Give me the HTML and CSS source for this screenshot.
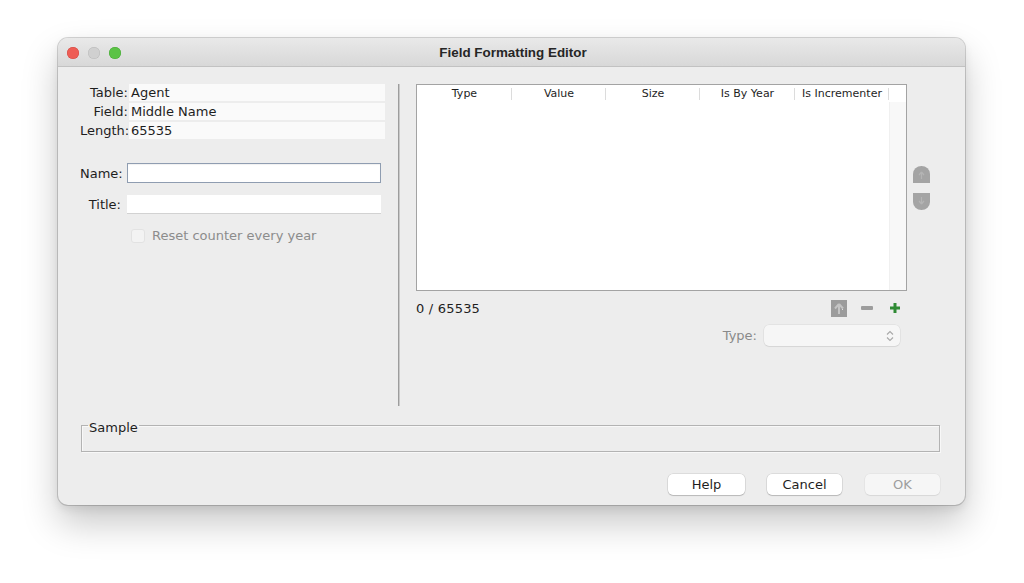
FILE: index.html
```html
<!DOCTYPE html>
<html lang="en">
<head>
<meta charset="utf-8">
<title>Field Formatting Editor</title>
<link rel="stylesheet" href="styles.css">
</head>
<body>
<div class="window">
  <div class="titlebar">
    <div class="lights">
      <span class="light red"></span>
      <span class="light gray"></span>
      <span class="light green"></span>
    </div>
    <div class="title">Field Formatting Editor</div>
  </div>
  <div class="content">
    <div class="main">
      <div class="left">
        <div class="info">
          <div class="info-row"><span class="info-label">Table:</span><span class="info-value">Agent</span></div>
          <div class="info-row"><span class="info-label">Field:</span><span class="info-value">Middle Name</span></div>
          <div class="info-row"><span class="info-label">Length:</span><span class="info-value">65535</span></div>
        </div>
        <div class="form-row name-row">
          <span class="form-label">Name:</span>
          <span class="input name-input"></span>
        </div>
        <div class="form-row title-row">
          <span class="form-label">Title:</span>
          <span class="input title-input"></span>
        </div>
        <div class="check-row">
          <span class="checkbox"></span>
          <span class="check-label">Reset counter every year</span>
        </div>
      </div>
      <div class="separator"></div>
      <div class="right">
        <div class="table">
          <div class="thead">
            <div class="th wide">Type</div>
            <div class="th">Value</div>
            <div class="th">Size</div>
            <div class="th wide">Is By Year</div>
            <div class="th">Is Incrementer</div>
            <div class="th-corner"></div>
          </div>
          <div class="tbody">
            <div class="rows"></div>
            <div class="scrolltrack"></div>
          </div>
        </div>
        <div class="status-row">
          <span class="count">0 / 65535</span>
          <div class="tools">
            <svg class="tool-up" width="16" height="17" viewBox="0 0 16 17">
              <rect width="16" height="17" fill="#9c9c9c"/>
              <path d="M8 4 L4 8.5 M8 4 L12 8.5 M8 4 V14" stroke="#c4c4c4" stroke-width="2" fill="none"/>
              <rect x="11" y="9" width="1" height="1" fill="#e0e0e0"/>
            </svg>
            <svg class="tool-minus" width="12" height="4" viewBox="0 0 12 4">
              <rect width="12" height="4" rx="1" fill="#9d9d9d"/>
            </svg>
            <svg class="tool-plus" width="10" height="10" viewBox="0 0 10 10">
              <path d="M3.5 0h3v3.5h3.5v3h-3.5v3.5h-3v-3.5h-3.5v-3h3.5z" fill="#2f8a34"/>
            </svg>
          </div>
        </div>
        <div class="type-row">
          <span class="type-label">Type:</span>
          <div class="combo">
            <svg width="8" height="12" viewBox="0 0 8 12">
              <path d="M1 4.5 L4 1.5 L7 4.5 M1 7.5 L4 10.5 L7 7.5" stroke="#a8a8a8" stroke-width="1.1" fill="none"/>
            </svg>
          </div>
        </div>
      </div>
      <div class="side-buttons">
        <svg width="17" height="17" viewBox="0 0 17 17">
          <path d="M0 8 A8.5 8 0 0 1 17 8 V17 H0 Z" fill="#a4a4a4"/>
          <path d="M8.5 6 L6 9 M8.5 6 L11 9 M8.5 6 V13" stroke="#b4b4b4" stroke-width="1.2" fill="none"/>
        </svg>
        <svg width="17" height="17" viewBox="0 0 17 17">
          <path d="M0 0 H17 V9 A8.5 8 0 0 1 0 9 Z" fill="#a4a4a4"/>
          <path d="M8.5 11 L6 8 M8.5 11 L11 8 M8.5 11 V4" stroke="#b4b4b4" stroke-width="1.2" fill="none"/>
        </svg>
      </div>
    </div>
    <fieldset class="sample">
      <legend>Sample</legend>
    </fieldset>
    <div class="buttons">
      <button class="btn help">Help</button>
      <button class="btn cancel">Cancel</button>
      <button class="btn ok" disabled>OK</button>
    </div>
  </div>
</div>
</body>
</html>
```
FILE: styles.css
```css
* { box-sizing: border-box; }

html, body {
  margin: 0;
  padding: 0;
  width: 1024px;
  height: 583px;
  overflow: hidden;
  background: #ffffff;
}

body {
  padding: 38px 0 0 58px;
  font-family: "DejaVu Sans", "Noto Sans", sans-serif;
  font-size: 13px;
  color: #1e1e1e;
}

.window {
  width: 907px;
  height: 467px;
  border-radius: 10px;
  background: #ededed;
  box-shadow: 0 0 0 1px rgba(0, 0, 0, 0.16), 0 18px 36px rgba(0, 0, 0, 0.22), 0 4px 10px rgba(0, 0, 0, 0.08);
  overflow: hidden;
  display: flex;
  flex-direction: column;
}

.titlebar {
  position: relative;
  height: 29px;
  flex: none;
  background: linear-gradient(#e9e9e9, #d8d8d8);
  border-bottom: 1px solid #c2c2c2;
  display: flex;
  align-items: center;
  justify-content: center;
}

.lights {
  position: absolute;
  left: 9px;
  top: 9px;
  display: flex;
  gap: 9px;
}

.light {
  width: 12px;
  height: 12px;
  border-radius: 50%;
  display: block;
}
.light.red { background: #ee5d55; box-shadow: inset 0 0 0 0.5px #d24a43; }
.light.gray { background: #d0d0d0; box-shadow: inset 0 0 0 0.5px #b9b9b9; }
.light.green { background: #5bc346; box-shadow: inset 0 0 0 0.5px #47a836; }

.title {
  font-family: "Liberation Sans", "Roboto", sans-serif;
  font-weight: bold;
  font-size: 13.4px;
  color: #262626;
  padding-top: 1px;
  padding-left: 3px;
}

.content {
  flex: 1;
  padding: 17px 25px 0 22px;
  display: flex;
  flex-direction: column;
}

.main {
  display: flex;
  height: 322px;
  flex: none;
}

/* left panel */
.left {
  width: 305px;
  flex: none;
}

.info {
  display: flex;
  flex-direction: column;
  gap: 2px;
}

.info-row {
  display: flex;
  height: 17px;
  align-items: center;
}

.info-label {
  width: 48px;
  text-align: right;
  line-height: 17px;
}

.info-value {
  margin-left: 1px;
  width: 256px;
  height: 17px;
  line-height: 17px;
  background: #fafafa;
  padding-left: 2px;
}

.form-row {
  display: flex;
  align-items: center;
}

.name-row { margin-top: 24px; }
.title-row { margin-top: 12px; }

.form-label {
  width: 41px;
  text-align: right;
  margin-right: 6px;
}

.input {
  display: block;
  width: 254px;
  background: #ffffff;
}

.name-input {
  height: 20px;
  border: 1px solid #8f9db1;
  box-shadow: inset 0 1px 1px rgba(0, 0, 0, 0.06);
}

.title-input {
  height: 19px;
  border-bottom: 1px solid #d2d2d2;
}

.check-row {
  display: flex;
  align-items: center;
  margin-top: 14px;
  padding-left: 51px;
}

.checkbox {
  width: 14px;
  height: 14px;
  border-radius: 3px;
  background: #f3f3f3;
  border: 1px solid #e2e2e2;
  margin-right: 7px;
}

.check-label {
  color: #8c8c8c;
}

.separator {
  width: 2px;
  margin-left: 13px;
  margin-right: 16px;
  background: #9d9d9d;
  border-right: 1px solid #c9c9c9;
}

/* right panel */
.right {
  width: 491px;
  flex: none;
  display: flex;
  flex-direction: column;
}

.table {
  height: 207px;
  border: 1px solid #a3a3a3;
  background: #ffffff;
  display: flex;
  flex-direction: column;
}

.thead {
  display: flex;
  height: 17px;
  flex: none;
}

.th {
  position: relative;
  width: 94px;
  font-size: 11px;
  line-height: 17px;
  text-align: center;
  color: #1e1e1e;
}

.th.wide { width: 95px; }

.th::after {
  content: "";
  position: absolute;
  right: 0;
  top: 3px;
  height: 12px;
  border-right: 1px solid #dcdcdc;
}

.th-corner { flex: 1; }

.tbody {
  flex: 1;
  display: flex;
}

.rows { flex: 1; }

.scrolltrack {
  width: 17px;
  background: #f8f8f8;
  border-left: 1px solid #f0f0f0;
}

.status-row {
  margin-top: 8px;
  height: 18px;
  display: flex;
  align-items: center;
  justify-content: space-between;
  padding-right: 7px;
}

.count {
  font-size: 13px;
  letter-spacing: 0.2px;
}

.tools {
  display: flex;
  align-items: center;
}

.tool-up { margin-right: 14px; }
.tool-minus { margin-right: 17px; }

.type-row {
  margin-top: 8px;
  display: flex;
  align-items: center;
  justify-content: flex-end;
  padding-right: 7px;
}

.type-label {
  color: #8a8a8a;
  margin-right: 7px;
}

.combo {
  width: 136px;
  height: 21px;
  border-radius: 5px;
  background: #f6f6f6;
  box-shadow: 0 0 0 0.5px rgba(0, 0, 0, 0.08), 0 1px 1px rgba(0, 0, 0, 0.06);
  display: flex;
  align-items: center;
  justify-content: flex-end;
  padding-right: 6px;
}

.side-buttons {
  margin-left: 6px;
  width: 17px;
  padding-top: 82px;
  display: flex;
  flex-direction: column;
  gap: 10px;
}

.side-buttons svg { display: block; }

/* sample */
.sample {
  margin: 10px 0 0 1px;
  padding: 0;
  height: 36px;
  border: 1px solid #b3b3b3;
  box-shadow: inset 1px 1px 0 #f8f8f8, 1px 1px 0 #f8f8f8;
}

.sample legend {
  margin-left: 6px;
  padding: 4px 1px 0;
  font-size: 13px;
  line-height: 15px;
  color: #1e1e1e;
}

/* buttons */
.buttons {
  margin-top: 22px;
  display: flex;
  justify-content: flex-end;
  gap: 22px;
}

.btn {
  font-family: "DejaVu Sans", "Noto Sans", sans-serif;
  font-size: 13px;
  height: 21px;
  width: 75px;
  padding: 0;
  border: none;
  border-radius: 5px;
  background: #ffffff;
  color: #1e1e1e;
  box-shadow: 0 0 0 0.5px rgba(0, 0, 0, 0.14), 0 1px 1px rgba(0, 0, 0, 0.16);
}

.btn.help { width: 77px; }

.btn.ok {
  margin-left: 1px;
  background: #f6f6f6;
  color: #9e9e9e;
  box-shadow: 0 0 0 0.5px rgba(0, 0, 0, 0.06), 0 1px 1px rgba(0, 0, 0, 0.06);
}
```
